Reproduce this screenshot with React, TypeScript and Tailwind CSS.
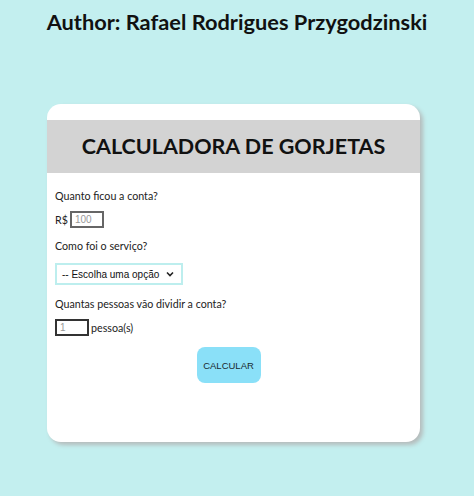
import React from "react";

export default function App() {
  return (
    <div className="min-h-[496px] w-full bg-[#c3efef] pt-[8px]" style={{ fontFamily: "Lato, 'Noto Sans', sans-serif" }}>
      <h1 className="text-center text-[21.8px] font-bold leading-[28px] text-[#111]">
        Author: Rafael Rodrigues Przygodzinski
      </h1>
      <div className="ml-[47px] mt-[68px] h-[338px] w-[373px] rounded-[14px] bg-white shadow-[3px_3px_4px_#b5bcbc] pt-[16px]">
        <div className="flex h-[53px] items-center justify-center bg-[#d3d3d3]">
          <h2 className="text-[21.5px] font-bold leading-none text-[#111]">CALCULADORA DE GORJETAS</h2>
        </div>
        <div className="px-[8px] text-[10.7px] leading-[17px] text-[#222]">
          <p className="mt-[14px]">Quanto ficou a conta?</p>
          <div className="mt-[7px] flex items-center gap-[2px]">
            <span>R$</span>
            <input
              className="h-[17px] w-[34px] border-2 border-[#666] px-[3px] text-[10px] outline-none placeholder:text-[#999]"
              style={{ fontFamily: "'Liberation Sans', Arial, sans-serif" }}
              placeholder="100"
            />
          </div>
          <p className="mt-[9px]">Como foi o serviço?</p>
          <div
            className="mt-[9px] flex h-[22px] w-[128px] items-center justify-between border-2 border-[#bdeeee] bg-white pl-[5px] pr-[7px] text-[10px] text-[#111]"
            style={{ fontFamily: "'Liberation Sans', Arial, sans-serif" }}
          >
            <span>-- Escolha uma opção</span>
            <svg width="8" height="6" viewBox="0 0 8 6">
              <path d="M1 1.5 L4 4.5 L7 1.5" fill="none" stroke="#222" strokeWidth="1.6" />
            </svg>
          </div>
          <p className="mt-[10px]">Quantas pessoas vão dividir a conta?</p>
          <div className="mt-[7px] flex items-center gap-[2px]">
            <input
              className="h-[17px] w-[34px] border-2 border-[#333] px-[3px] text-[10px] outline-none placeholder:text-[#999]"
              style={{ fontFamily: "'Liberation Sans', Arial, sans-serif" }}
              placeholder="1"
            />
            <span>pessoa(s)</span>
          </div>
          <div className="mt-[11px] flex justify-center pr-[10px]">
            <button
              className="h-[36px] w-[64px] rounded-[8px] bg-[#8ae0f8] text-[9.5px] text-[#1a2a30]"
              style={{ fontFamily: "'Liberation Sans', Arial, sans-serif" }}
            >
              CALCULAR
            </button>
          </div>
        </div>
      </div>
    </div>
  );
}
